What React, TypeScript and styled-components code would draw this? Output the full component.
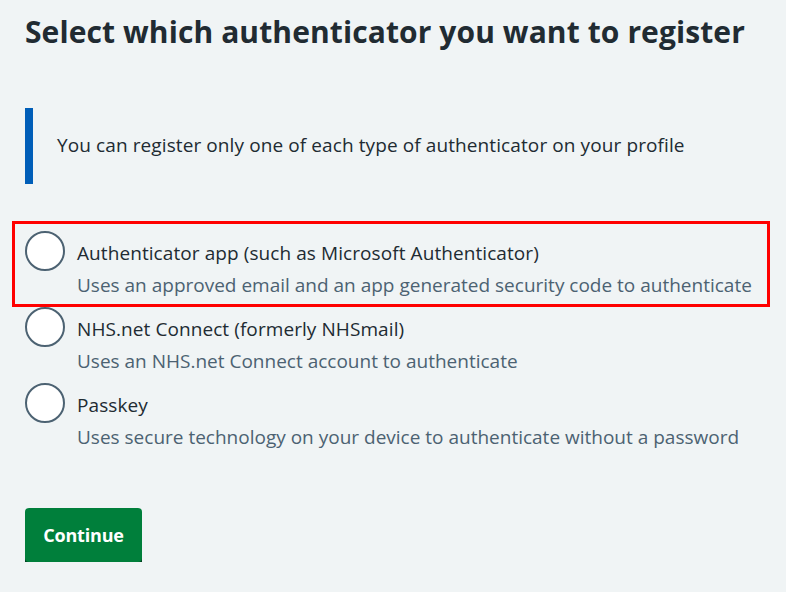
import React from "react";
import styled, { createGlobalStyle } from "styled-components";

const Global = createGlobalStyle`
  html, body { margin: 0; padding: 0; background: #f0f4f5; }
  body { font-family: "Open Sans", "Noto Sans", sans-serif; color: #212b32; }
`;

const Page = styled.main`
  padding: 12px 25px 0 25px;
`;

const Heading = styled.h1`
  margin: 0;
  font-size: 30px;
  line-height: 40px;
  font-weight: 700;
  letter-spacing: 0.1px;
  color: #212b32;
`;

const Inset = styled.div`
  margin-top: 56px;
  border-left: 8px solid #005eb8;
  padding: 21px 0 23px 24px;
  font-size: 19px;
  line-height: 32px;
  letter-spacing: 0.1px;
`;

const Options = styled.div`
  margin-top: 37px;
  display: flex;
  flex-direction: column;
`;

const Option = styled.label<{ $highlight?: boolean }>`
  position: relative;
  display: grid;
  grid-template-columns: 40px 1fr;
  column-gap: 12px;
  height: 76px;
  box-sizing: border-box;
  padding-top: 10px;
  ${(p) =>
    p.$highlight &&
    `&::after {
      content: "";
      position: absolute;
      left: -13px;
      top: 0;
      width: 758px;
      height: 86px;
      border: 3px solid #ff0000;
      box-sizing: border-box;
    }`}
`;

const Radio = styled.span`
  width: 40px;
  height: 40px;
  border-radius: 50%;
  border: 2px solid #4c6272;
  background: #ffffff;
  box-sizing: border-box;
`;

const Texts = styled.span`
  display: flex;
  flex-direction: column;
`;

const Label = styled.span`
  font-size: 19px;
  line-height: 24px;
  margin-top: 10px;
  letter-spacing: 0.08px;
  color: #212b32;
`;

const Hint = styled.span`
  font-size: 19px;
  line-height: 24px;
  margin-top: 8px;
  color: #4c6272;
`;

const Button = styled.button`
  margin-top: 59px;
  font-family: inherit;
  font-size: 18px;
  font-weight: 700;
  color: #ffffff;
  background: #007f3b;
  border: none;
  border-radius: 4px;
  box-shadow: 0 4px 0 #00401e;
  width: 117px;
  height: 54px;
  padding: 0;
  letter-spacing: -0.2px;
`;

const options = [
  {
    label: "Authenticator app (such as Microsoft Authenticator)",
    hint: "Uses an approved email and an app generated security code to authenticate",
    highlight: true,
  },
  {
    label: "NHS.net Connect (formerly NHSmail)",
    hint: "Uses an NHS.net Connect account to authenticate",
  },
  {
    label: "Passkey",
    hint: "Uses secure technology on your device to authenticate without a password",
  },
];

export default function App() {
  return (
    <>
      <Global />
      <Page>
        <Heading>Select which authenticator you want to register</Heading>
        <Inset>You can register only one of each type of authenticator on your profile</Inset>
        <Options>
          {options.map((o) => (
            <Option key={o.label} $highlight={o.highlight}>
              <Radio />
              <Texts>
                <Label>{o.label}</Label>
                <Hint>{o.hint}</Hint>
              </Texts>
            </Option>
          ))}
        </Options>
        <Button>Continue</Button>
      </Page>
    </>
  );
}
